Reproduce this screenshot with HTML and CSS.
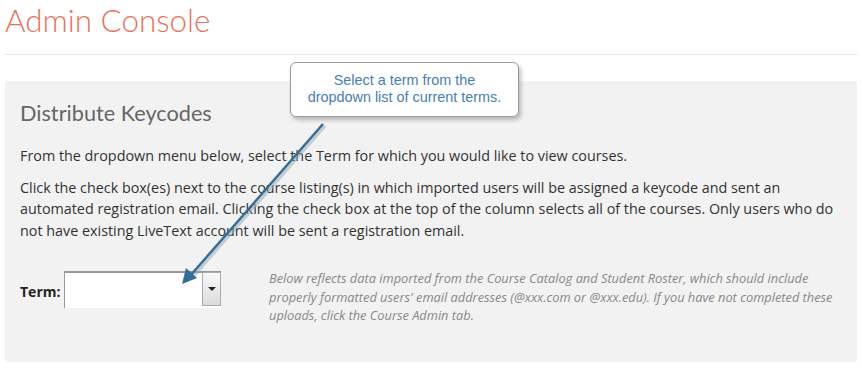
FILE: index.html
```html
<!DOCTYPE html>
<html lang="en">
<head>
    <meta charset="UTF-8">
    <title>Admin Console</title>
    <link rel="stylesheet" href="styles.css">
</head>
<body>
    <div class="page">
        <h1 class="page-title">Admin Console</h1>
        <hr class="rule">

        <div class="panel">
            <h2>Distribute Keycodes</h2>
            <p>From the dropdown menu below, select the Term for which you would like to view courses.</p>
            <p>Click the check box(es) next to the course listing(s) in which imported users will be assigned a keycode and sent an automated registration email. Clicking the check box at the top of the column selects all of the courses. Only users who do not have existing LiveText account will be sent a registration email.</p>

            <div class="term-row">
                <label class="term-label">Term:</label>
                <div class="term-select">
                    <div class="term-value"></div>
                    <div class="term-btn"><span class="caret"></span></div>
                </div>
                <p class="term-note">Below reflects data imported from the Course Catalog and Student Roster, which should include properly formatted users' email addresses (@xxx.com or @xxx.edu). If you have not completed these uploads, click the Course Admin tab.</p>
            </div>
        </div>

        <!-- annotation overlay -->
        <div class="callout">Select a term from the<br>dropdown list of current terms.</div>
        <svg class="pointer" width="862" height="379" viewBox="0 0 862 379">
            <line x1="323" y1="124" x2="190" y2="276" stroke="#9aa7b0" stroke-width="3" opacity="0.5" transform="translate(2,2)"/>
            <line x1="323" y1="124" x2="190" y2="276" stroke="#2f6f98" stroke-width="2.5"/>
            <polygon points="182,284 186,268 197,278" fill="#2f6f98"/>
        </svg>
    </div>
</body>
</html>
```

FILE: styles.css
```css
body {
    margin: 0;
    background: #fff;
    font-family: "Open Sans", Arial, sans-serif;
    color: #333;
}

.page {
    position: relative;
    width: 862px;
    height: 379px;
    overflow: hidden;
}

.page-title {
    margin: 0;
    padding: 0 0 0 5px;
    font-family: Lato, "Open Sans", sans-serif;
    font-weight: 300;
    font-size: 31.4px;
    line-height: 40px;
    color: #e8735a;
}

.rule {
    margin: 14px 5px 0 5px;
    border: none;
    border-top: 1px solid #e6e6e6;
    height: 0;
}

.panel {
    margin: 26px 5px 0 5px;
    height: 281px;
    background-color: #f2f2f2;
    border-radius: 3px;
    padding: 18px 15px 0 15px;
    box-sizing: border-box;
}

.panel h2 {
    margin: 0 0 18px 0;
    font-family: Lato, "Open Sans", sans-serif;
    font-weight: 400;
    font-size: 21.7px;
    line-height: 28px;
    color: #666;
}

.panel p {
    margin: 0 0 10px 0;
    font-size: 14.35px;
    line-height: 21.5px;
}

.term-row {
    display: flex;
    align-items: flex-start;
    margin-top: 30px;
}

.term-label {
    font-weight: bold;
    font-size: 14px;
    margin-top: 11px;
    color: #222;
}

.term-select {
    display: flex;
    width: 159px;
    height: 37px;
    margin-left: 4px;
    background: #fff;
    border-top: 2px solid #999;
    border-left: 1px solid #999;
    box-sizing: border-box;
}

.term-value {
    flex: 1;
}

.term-btn {
    width: 19px;
    height: 34px;
    margin-top: -1px;
    border: 1px solid #aaa;
    background: linear-gradient(#f8f8f8, #dcdcdc);
    box-sizing: border-box;
    display: flex;
    justify-content: center;
    align-items: center;
}

.caret {
    width: 0;
    height: 0;
    border-left: 4px solid transparent;
    border-right: 4px solid transparent;
    border-top: 4px solid #222;
}

.panel .term-note {
    margin: 0 0 0 48px;
    width: 582px;
    font-style: italic;
    font-size: 12.8px;
    line-height: 18.5px;
    color: #888;
    position: relative;
    top: -2px;
}

.callout {
    position: absolute;
    left: 290px;
    top: 62px;
    width: 229px;
    height: 55px;
    box-sizing: border-box;
    padding-top: 9px;
    background: #fff;
    border: 1px solid #9a9a9a;
    border-radius: 6px;
    box-shadow: 2px 3px 4px rgba(0, 0, 0, 0.25);
    font-family: "Liberation Sans", Arial, sans-serif;
    font-size: 14.4px;
    line-height: 17px;
    color: #4580b5;
    text-align: center;
}

.pointer {
    position: absolute;
    left: 0;
    top: 0;
}
```
